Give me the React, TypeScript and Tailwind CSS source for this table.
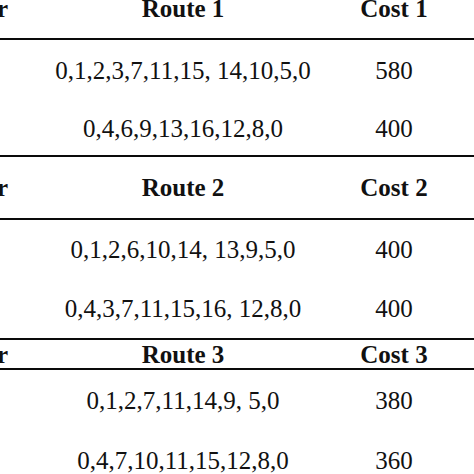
const sections = [
  {
    route: 'Route 1',
    cost: 'Cost 1',
    headHeight: 'h-[59px]',
    rows: [
      { path: '0,1,2,3,7,11,15, 14,10,5,0', cost: '580', height: 'h-[61px]' },
      { path: '0,4,6,9,13,16,12,8,0', cost: '400', height: 'h-[54px]' },
    ],
  },
  {
    route: 'Route 2',
    cost: 'Cost 2',
    headHeight: 'h-[61px]',
    rows: [
      { path: '0,1,2,6,10,14, 13,9,5,0', cost: '400', height: 'h-[59px]' },
      { path: '0,4,3,7,11,15,16, 12,8,0', cost: '400', height: 'h-[59px]' },
    ],
  },
  {
    route: 'Route 3',
    cost: 'Cost 3',
    headHeight: 'h-[28px]',
    rows: [
      { path: '0,1,2,7,11,14,9, 5,0', cost: '380', height: 'h-[61px]' },
      { path: '0,4,7,10,11,15,12,8,0', cost: '360', height: 'h-[58px]' },
    ],
  },
];

const Rule = () => <div className="h-[2px] w-full bg-[#0a0a0a]" />;

export default function App() {
  return (
    <div
      className="h-[474px] w-[474px] overflow-hidden bg-white text-[25px] leading-none text-[#111]"
      style={{ fontFamily: '"Liberation Serif", "Times New Roman", serif' }}
    >
      <div className="-mt-[21px] flex flex-col">
        {sections.map((s, i) => (
          <div key={s.route} className="flex flex-col">
            {i > 0 && <Rule />}
            {/* header row */}
            <div className={`grid grid-cols-[8px_350px_72px_1fr] items-center font-bold ${s.headHeight}`}>
              <div className="flex justify-end">
                <span className="whitespace-nowrap">Vehicle number</span>
              </div>
              <div className="text-center whitespace-nowrap">{s.route}</div>
              <div className="text-center whitespace-nowrap">{s.cost}</div>
              <div />
            </div>
            <Rule />
            {s.rows.map((r) => (
              <div key={r.path} className={`grid grid-cols-[8px_350px_72px_1fr] items-center ${r.height}`}>
                <div />
                <div className="text-center whitespace-pre">{r.path}</div>
                <div className="text-center">{r.cost}</div>
                <div />
              </div>
            ))}
          </div>
        ))}
      </div>
    </div>
  );
}
